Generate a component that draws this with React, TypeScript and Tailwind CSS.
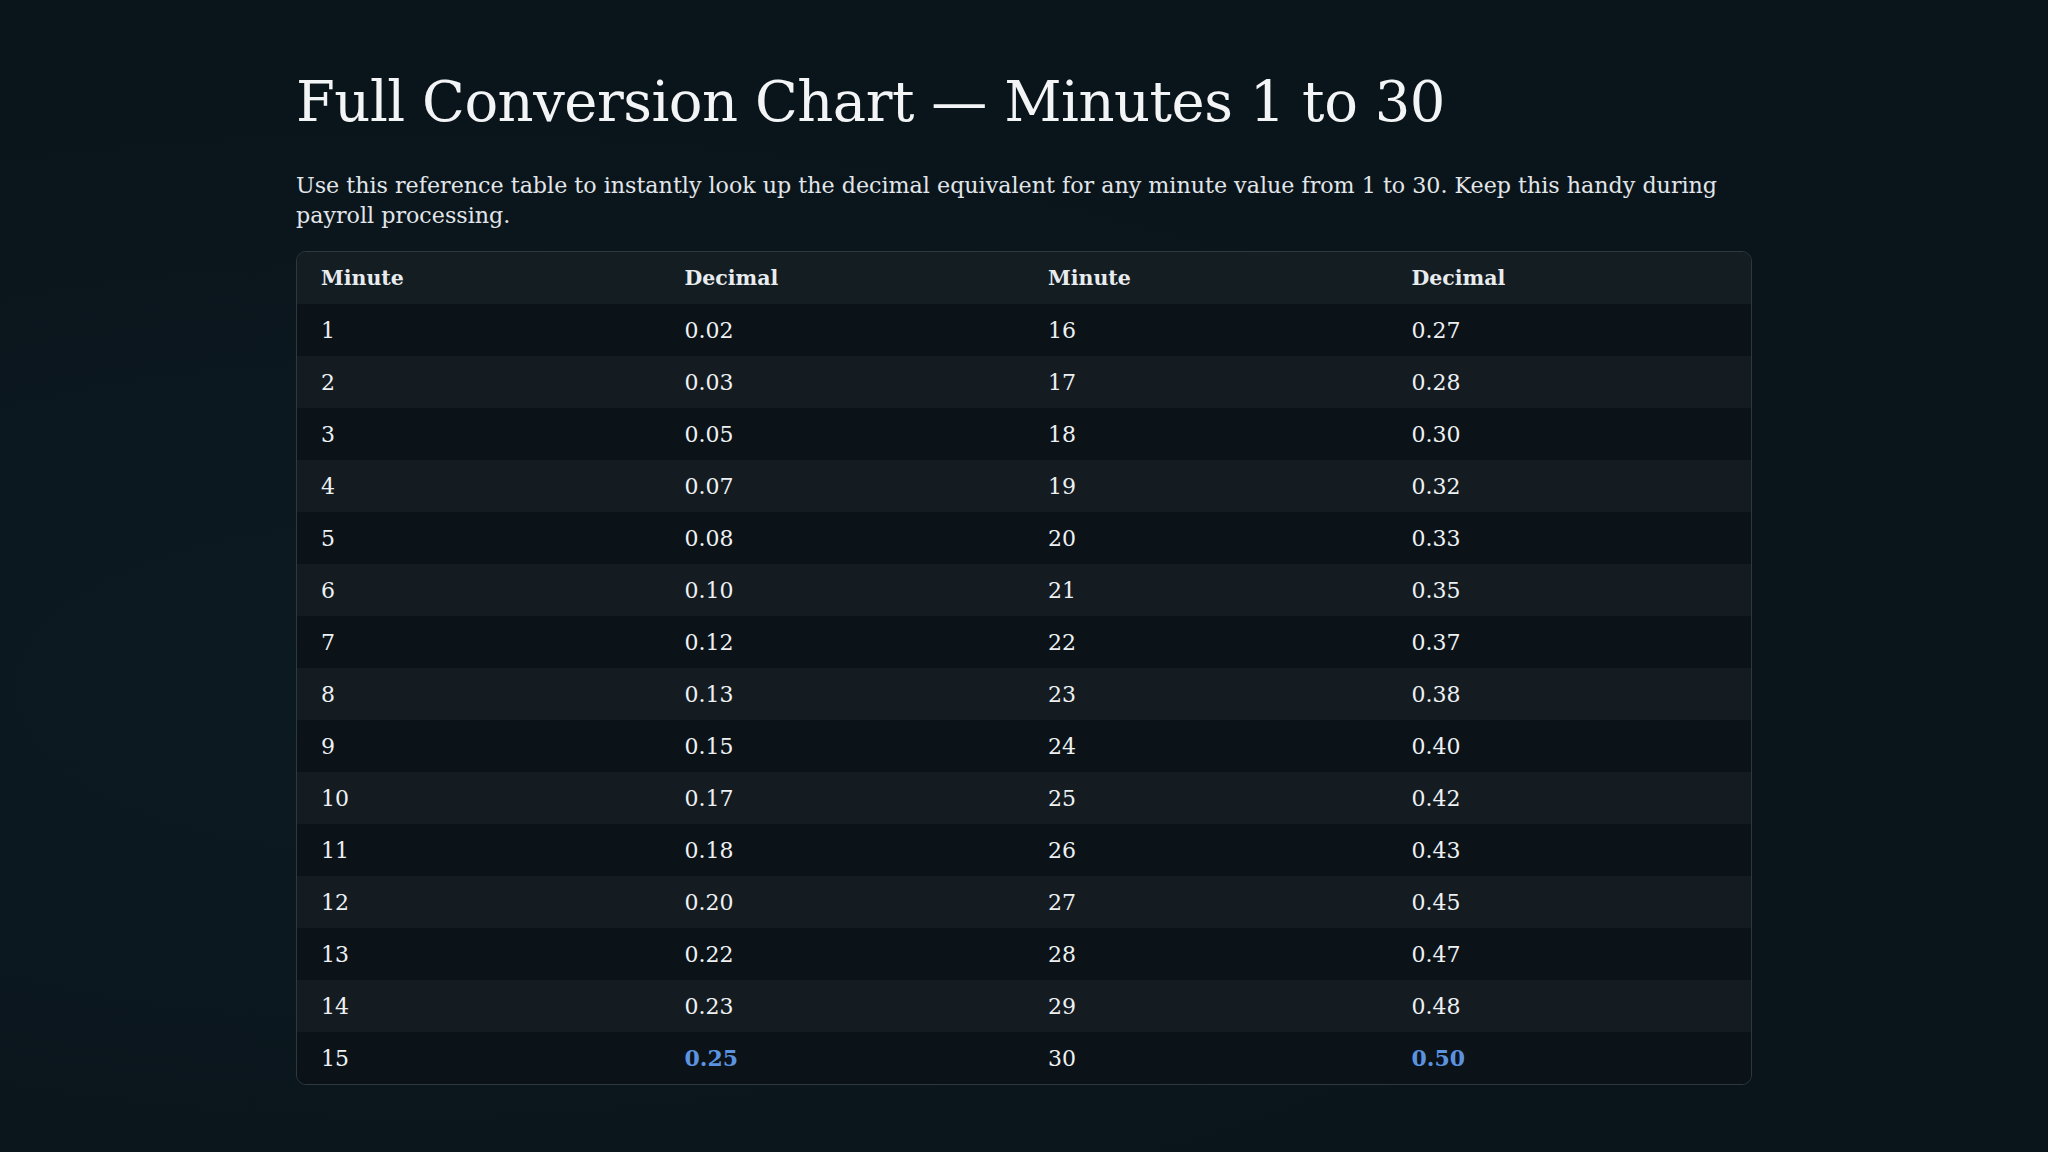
const rows: [number, string, number, string][] = Array.from({ length: 15 }, (_, i) => {
  const a = i + 1;
  const b = i + 16;
  return [a, (a / 60).toFixed(2), b, (b / 60).toFixed(2)];
});

export default function App() {
  return (
    <div
      className="min-h-screen w-full bg-[#0a151b] bg-[radial-gradient(ellipse_at_20%_60%,#0c1a21_0%,#0a151b_60%)] text-[#eef1f3]"
      style={{ fontFamily: '"DejaVu Serif", "Liberation Serif", serif' }}
    >
      <div className="mx-auto w-[1456px] pt-[66px]">
        <h1 className="text-[56px] leading-[72px] font-normal tracking-[-0.5px] text-[#f3f4f6]">
          Full Conversion Chart — Minutes 1 to 30
        </h1>
        <p className="mt-[32px] text-[22.2px] leading-[30px] text-[#e2e6ea]">
          Use this reference table to instantly look up the decimal equivalent for any minute value from 1 to 30. Keep this handy during payroll processing.
        </p>
        <div className="mt-[21px] overflow-hidden rounded-[10px] border border-[#2e393f]">
          <table className="w-full table-fixed border-collapse text-[22px]">
            <thead>
              <tr className="bg-[#141d22]">
                {['Minute', 'Decimal', 'Minute', 'Decimal'].map((h, i) => (
                  <th key={i} className="h-[52px] px-[24px] text-left text-[20.5px] font-bold text-[#e8ecef]">
                    {h}
                  </th>
                ))}
              </tr>
            </thead>
            <tbody>
              {rows.map(([a, da, b, db], i) => {
                const last = i === rows.length - 1;
                return (
                  <tr key={a} className={i % 2 === 0 ? 'bg-[#0b1318]' : 'bg-[#141c21]'}>
                    <td className="h-[52px] px-[24px]">{a}</td>
                    <td className={last ? 'h-[52px] px-[24px] font-bold text-[#5b93e0]' : 'h-[52px] px-[24px]'}>{da}</td>
                    <td className="h-[52px] px-[24px]">{b}</td>
                    <td className={last ? 'h-[52px] px-[24px] font-bold text-[#5b93e0]' : 'h-[52px] px-[24px]'}>{db}</td>
                  </tr>
                );
              })}
            </tbody>
          </table>
        </div>
      </div>
    </div>
  );
}
